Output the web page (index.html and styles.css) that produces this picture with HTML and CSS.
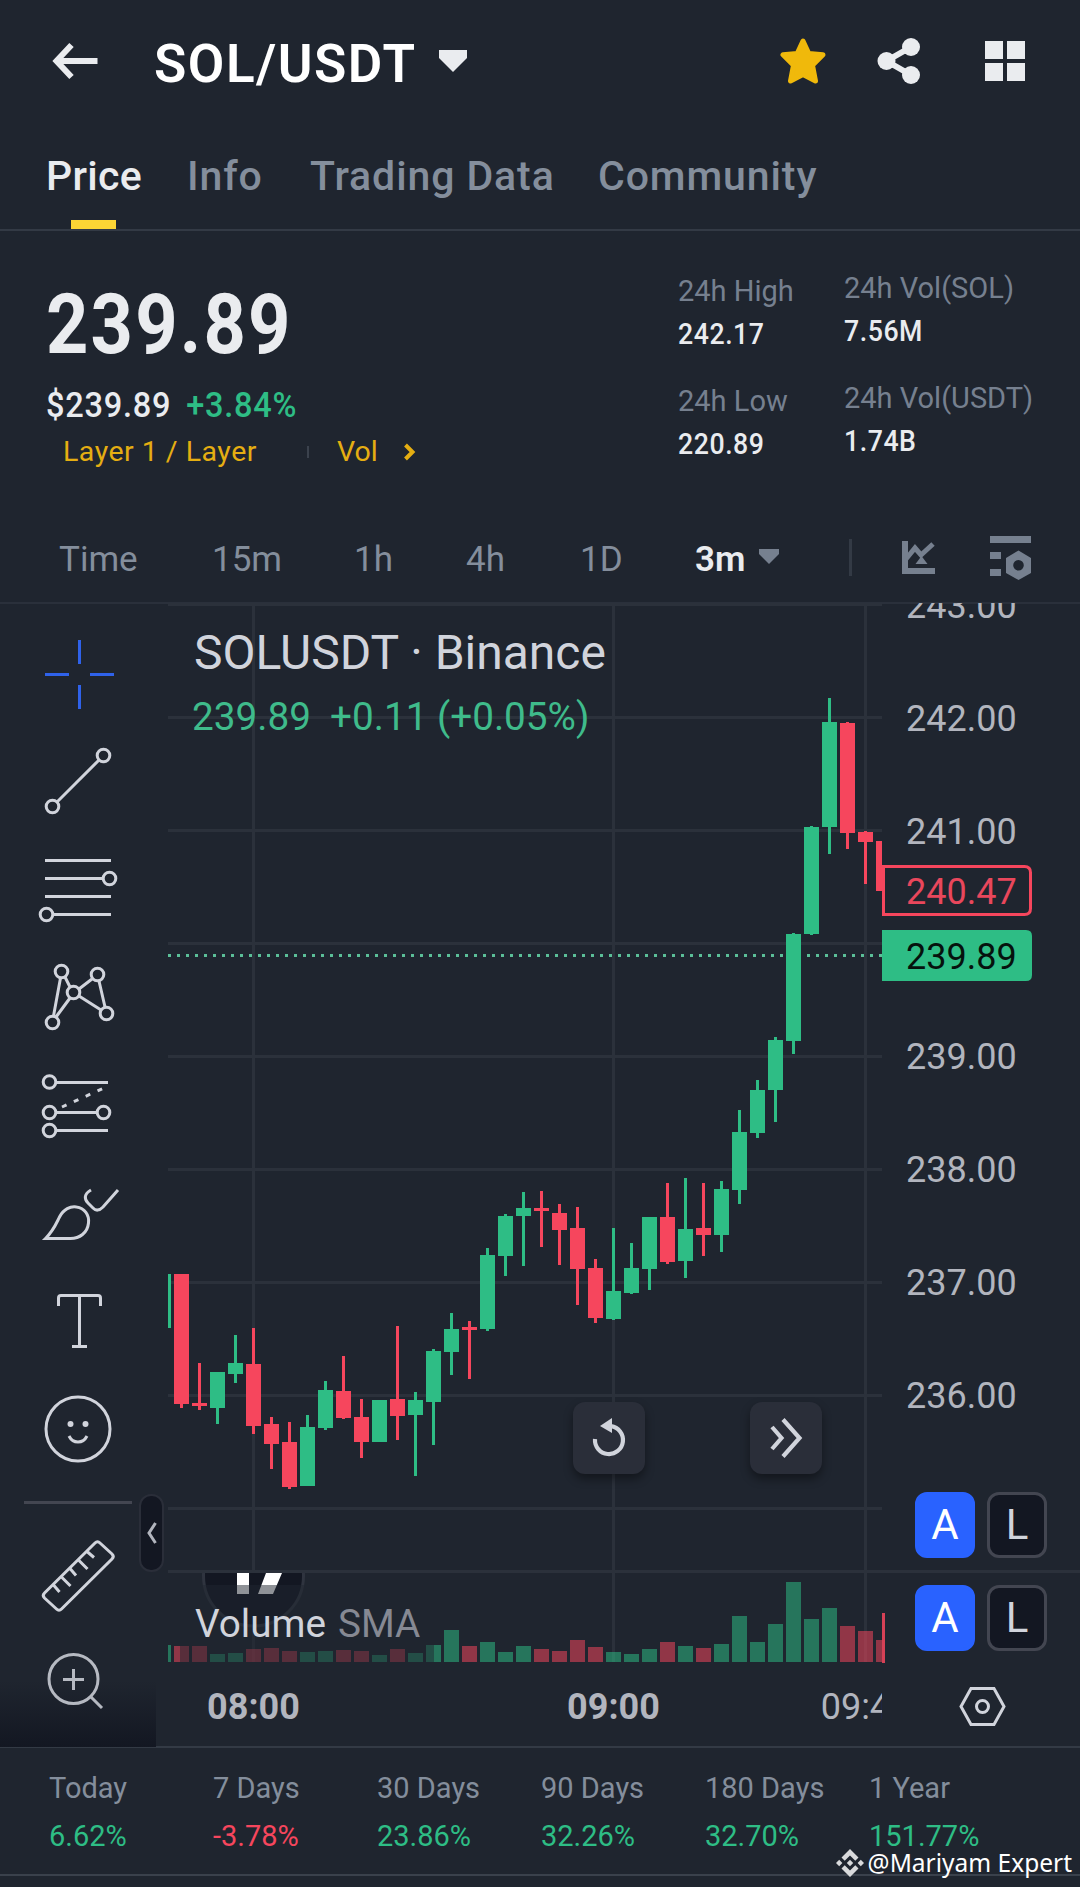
FILE: index.html
```
<!DOCTYPE html>
<html lang="en">
<head>
<meta charset="UTF-8">
<meta name="viewport" content="width=device-width, initial-scale=1.0">
<title>SOL/USDT</title>
<link rel="stylesheet" href="styles.css">
</head>
<body>

<header class="topbar">
  <svg class="back" width="46" height="38" viewBox="0 0 46 38"><path d="M45.500 19H5M19.500 3L4.500 19l15 16" fill="none" stroke="#eaecef" stroke-width="6"/></svg>
  <h1>SOL/USDT</h1>
  <svg class="caret" width="28" height="22" viewBox="0 0 28 22"><path d="M0 0h28v8L14 22 0 8z" fill="#eaecef"/></svg>
  <div class="actions">
    <svg width="46" height="48" viewBox="0 0 46 48"><path d="M23 4l5.800 12.500 14.200 1.300-10.500 10.500 3 15.700L23 37.500 10.500 44l3-15.700L3 17.800l14.200-1.300z" fill="#f0b90b" stroke="#f0b90b" stroke-width="5" stroke-linejoin="round"/></svg>
    <svg width="44" height="48" viewBox="0 0 44 48"><g fill="#eaecef"><circle cx="9.500" cy="24" r="9"/><circle cx="34" cy="10" r="9"/><circle cx="34" cy="38" r="9"/></g><path d="M34 10L9.500 24 34 38" fill="none" stroke="#eaecef" stroke-width="6"/></svg>
    <svg width="40" height="40" viewBox="0 0 40 40"><path d="M0 0h18v18H0zM22 0h18v18H22zM0 22h18v18H0zM22 22h18v18H22z" fill="#eaecef"/></svg>
  </div>
</header>

<nav class="tabs">
  <a class="tab active">Price</a>
  <a class="tab">Info</a>
  <a class="tab">Trading Data</a>
  <a class="tab">Community</a>
</nav>

<section class="ticker">
  <div class="quote">
    <div class="last">239.89</div>
    <div class="sub"><span>$239.89</span><span class="change up">+3.84%</span></div>
    <div class="tags">
      <span class="layer">Layer 1 / Layer</span>
      <i class="sep"></i>
      <span>Vol</span>
      <svg width="13" height="18" viewBox="0 0 13 18"><path d="M2.500 2l7 7-7 7" fill="none" stroke="#e5ae12" stroke-width="4"/></svg>
    </div>
  </div>
  <div class="stats">
    <div class="stat"><span>24h High</span><b>242.17</b></div>
    <div class="stat"><span>24h Low</span><b>220.89</b></div>
  </div>
  <div class="stats right">
    <div class="stat"><span>24h Vol(SOL)</span><b>7.56M</b></div>
    <div class="stat"><span>24h Vol(USDT)</span><b>1.74B</b></div>
  </div>
</section>

<nav class="intervals">
  <span>Time</span>
  <span>15m</span>
  <span>1h</span>
  <span>4h</span>
  <span>1D</span>
  <span class="selected">3m <svg width="20" height="15" viewBox="0 0 20 15"><path d="M0 0h20v5l-10 10L0 5z" fill="#76808f"/></svg></span>
  <i class="bar"></i>
  <svg width="34" height="34" viewBox="0 0 34 34"><path d="M3 0v30h30" fill="none" stroke="#76808f" stroke-width="6"/><path d="M4 18l9-11 6 7L31 3" fill="none" stroke="#76808f" stroke-width="5"/><path d="M19.500 15l6 8h-12z" fill="#76808f"/></svg>
  <svg width="42" height="44" viewBox="0 0 42 44"><path d="M0 0h41v7H0zM0 16h11v7H0zM0 33h11v7H0z" fill="#76808f"/><path d="M28.500 14.500L41 22v15l-12.500 7L16 37V22zM28.500 24a5.300 5.300 0 100 10.600 5.300 5.300 0 000-10.600z" fill="#76808f" fill-rule="evenodd"/></svg>
</nav>

<main class="chart">
  <aside class="tools">
    <svg class="blue" viewBox="0 620 156 108"><path d="M79.500 640v24M79.500 685v24M45 674.500h24M90 674.500h24"/></svg>
    <svg viewBox="0 728 156 108"><circle cx="52.500" cy="806.500" r="6.300"/><circle cx="103.500" cy="755.500" r="6.300"/><path d="M57 802l42-42"/></svg>
    <svg viewBox="0 836 156 108"><path d="M45 860.500h66M45 878.500h58M45 896.500h66M53 914.500h58"/><circle cx="109.500" cy="878.500" r="6.300"/><circle cx="46.500" cy="914.500" r="6.300"/></svg>
    <svg viewBox="0 944 156 108"><circle cx="61.500" cy="971.500" r="6.300"/><circle cx="97.500" cy="974.500" r="6.300"/><circle cx="73.500" cy="992.500" r="6.300"/><circle cx="106.500" cy="1013.500" r="6.300"/><circle cx="52.500" cy="1022.500" r="6.300"/><path d="M60.500 978l-7 38M65 977l5 10M79 989l13-10M99 981l6 26M79 996l22 14M70 998l-14 19"/></svg>
    <svg viewBox="0 1052 156 108"><circle cx="49.500" cy="1082" r="6.300"/><circle cx="49.500" cy="1112.500" r="6.300"/><circle cx="103.500" cy="1112.500" r="6.300"/><circle cx="49.500" cy="1130.500" r="6.300"/><path d="M56 1082.500h52M56 1112.500h41M56 1130.500h52"/><path d="M62 1107l42-19" stroke-dasharray="5 8"/></svg>
    <svg viewBox="0 1160 156 108"><path d="M45.500 1238.500c8-8 10-13.500 14-21.500 4-8 11-11 17-10 8 1 13 8 12 16-1 10-9 15.500-18 15.500zM91 1190c-7 4-7 9-3 13l5 5c3 3 6 3 10-1l15-17"/></svg>
    <svg viewBox="0 1268 156 108"><path d="M58.500 1306v-8q0-2.500 2.500-2.500h37q2.500 0 2.500 2.500v8M79.500 1296v50M72 1346.500h15"/></svg>
    <svg viewBox="0 1376 156 108"><circle cx="78" cy="1429" r="32"/><path d="M69 1436c4 8 14 8 18 0"/><g class="fill"><circle cx="70.500" cy="1424" r="3"/><circle cx="85.500" cy="1424" r="3"/></g></svg>
    <hr>
    <svg viewBox="0 1522 156 108"><path d="M95 1543q2.500-2.500 5 0l12 11q2.500 2.500 0 5l-50.500 50q-2.500 2.500-5 0l-12-11q-2.500-2.500 0-5zM53.500 1585l6 7M61.500 1577l9 9M70 1568.500l6 7M78.500 1560l9 9M87 1551.500l7 6"/></svg>
    <svg class="last-tool" viewBox="0 1630 156 117"><circle cx="73.500" cy="1679" r="24.500"/><path d="M63 1679.500h21M73.500 1669v21M91 1697l11 11"/></svg>
  </aside>

  <div class="plot">
    <svg id="plot" width="924" height="1145" viewBox="156 602 924 1145">
      <defs>
        <clipPath id="pane"><rect x="168" y="603" width="714" height="1144"/></clipPath>
        <clipPath id="scale"><rect x="882" y="603" width="198" height="1144"/></clipPath>
        <clipPath id="volPane"><rect x="168" y="1573" width="714" height="90"/></clipPath>
      </defs>

      <g class="grid">
        <path d="M168 604.500h714M168 717.500h714M168 830.500h714M168 943.500h714M168 1056.500h714M168 1169.500h714M168 1282.500h714M168 1395.500h714M168 1508.500h714"/>
        <path d="M253.500 603v1059M613.500 603v1059M865.500 603v1059"/>
        <path d="M168 1571.500h912"/>
      </g>

      <g clip-path="url(#volPane)">
        <circle cx="253.500" cy="1576" r="50" fill="#131722" stroke="#2f343f" stroke-width="3"/>
        <path d="M237 1573h12v21h-12zM266 1573h16l-9 21h-15z" fill="#fff"/>
      </g>

      <g id="volume" clip-path="url(#volPane)"></g>
      <rect x="180" y="1585" width="254" height="78" fill="#1f252f" opacity=".5"/>
      <path d="M883.500 1613v50" stroke="#f6465d" stroke-width="3" opacity=".85"/>

      <path d="M168 955.500h714" stroke="#5bbf98" stroke-width="3" stroke-dasharray="3 6"/>
      <g id="candles" clip-path="url(#pane)"></g>

      <text class="legend-title" x="194" y="669">SOLUSDT · Binance</text>
      <text class="legend-price" x="192" y="730">239.89</text>
      <text class="legend-price" x="330" y="730">+0.11 (+0.05%)</text>
      <text class="legend-vol" x="195" y="1637">Volume</text>
      <text class="legend-vol dim" x="338" y="1637">SMA</text>

      <g class="axis" clip-path="url(#scale)">
        <text x="906" y="618">243.00</text>
        <text x="906" y="731">242.00</text>
        <text x="906" y="844">241.00</text>
        <text x="906" y="1069">239.00</text>
        <text x="906" y="1182">238.00</text>
        <text x="906" y="1295">237.00</text>
        <text x="906" y="1408">236.00</text>
      </g>
      <path d="M883.500 866.500h141q6 0 6 6v36q0 6-6 6h-141z" fill="#1f252f" stroke="#f6465d" stroke-width="3"/>
      <text class="tag-red" x="906" y="904">240.47</text>
      <path d="M882 930h144q6 0 6 6v39q0 6-6 6H882z" fill="#2ebd85"/>
      <text class="tag-green" x="906" y="969">239.89</text>

      <g class="times" clip-path="url(#pane)">
        <text x="253.500" y="1719">08:00</text>
        <text x="613.500" y="1719">09:00</text>
        <text class="thin" x="865.500" y="1719">09:42</text>
      </g>
      <path d="M971 1688.500h23l10 18-10 18h-23l-10-18z" fill="none" stroke="#d1d4dc" stroke-width="3"/>
      <circle cx="982.500" cy="1706.500" r="6" fill="none" stroke="#d1d4dc" stroke-width="3"/>
    </svg>

    <button class="collapse"><svg width="10" height="24" viewBox="0 0 10 24"><path d="M8.500 2L2 12l6.500 10" fill="none" stroke="#b2b5be" stroke-width="3"/></svg></button>
    <button class="float reset"><svg width="36" height="40" viewBox="0 0 36 40"><path d="M20 8.200A14 14 0 1 1 4 21" fill="none" stroke="#d1d4dc" stroke-width="4.200"/><path d="M9 8L21 0v15z" fill="#d1d4dc"/></svg></button>
    <button class="float forward"><svg width="34" height="42" viewBox="0 0 34 42"><path d="M3 10l9.500 11L3 32M14 2.500L30.500 21 14 39.500" fill="none" stroke="#d1d4dc" stroke-width="4.200"/></svg></button>
    <div class="modes price-modes"><button class="mode on">A</button><button class="mode">L</button></div>
    <div class="modes vol-modes"><button class="mode on">A</button><button class="mode">L</button></div>
  </div>
</main>

<section class="performance">
  <div><span>Today</span><span class="up">6.62%</span></div>
  <div><span>7 Days</span><span class="down">-3.78%</span></div>
  <div><span>30 Days</span><span class="up">23.86%</span></div>
  <div><span>90 Days</span><span class="up">32.26%</span></div>
  <div><span>180 Days</span><span class="up">32.70%</span></div>
  <div><span>1 Year</span><span class="up">151.77%</span></div>
</section>

<div class="credit">
  <svg width="28" height="28" viewBox="0 0 28 28"><path d="M14 0l8.500 8.500-3.200 3.200L14 6.400l-5.300 5.300-3.200-3.200zM14 28l8.500-8.500-3.200-3.200L14 21.600l-5.300-5.300-3.200 3.200zM14 10.800l3.200 3.200-3.200 3.200-3.200-3.200zM3.200 10.800L6.400 14l-3.200 3.200L0 14zM24.800 10.800L28 14l-3.200 3.200-3.200-3.200z" fill="#d9dadc"/></svg>
  <span>@Mariyam Expert</span>
</div>

<script src="chart.js"></script>
</body>
</html>
```
FILE: styles.css
```
* {
  box-sizing: border-box;
}

body {
  position: relative;
  width: 1080px;
  height: 1887px;
  margin: 0;
  overflow: hidden;
  background: #1f252f;
  color: #eaecef;
  font-family: Roboto, "Noto Sans", sans-serif;
}

svg {
  display: block;
  flex: none;
}

button {
  padding: 0;
  border: 0;
  font-family: inherit;
}

.up {
  color: #2ebd85;
}

.down {
  color: #f6465d;
}

/* header */
.topbar {
  display: flex;
  align-items: center;
  height: 122px;
  padding: 0 55px 0 52px;
}

.topbar h1 {
  width: 262px;
  margin: 5px 0 0 56px;
  color: #fff;
  font-size: 53px;
  font-weight: 600;
  letter-spacing: 1.500px;
  white-space: nowrap;
}

.caret {
  margin-left: 23px;
}

.actions {
  display: flex;
  align-items: center;
  margin-left: auto;
}

.actions svg:nth-child(1) {
  margin-right: 51px;
}

.actions svg:nth-child(2) {
  margin-right: 64px;
}

.tabs {
  display: grid;
  grid-template-columns: 141px 123px 288px auto;
  height: 109px;
  padding-left: 46px;
  border-bottom: 2px solid #333a45;
}

.tab {
  justify-self: start;
  height: 107px;
  padding-top: 30px;
  color: #848e9c;
  font-size: 41px;
  line-height: 48px;
  font-weight: 500;
  letter-spacing: .9px;
  white-space: nowrap;
}

.tab.active {
  color: #eaecef;
  letter-spacing: .3px;
}

.tab.active::after {
  content: "";
  display: block;
  width: 45px;
  height: 9px;
  margin: 20px auto 0;
  background: #fcd535;
}

/* price and 24h stats */
.ticker {
  display: grid;
  grid-template-columns: 632px 166px auto;
  height: 284px;
  padding-left: 46px;
}

.last {
  margin-top: 46px;
  font-size: 84px;
  line-height: 96px;
  font-weight: 700;
  letter-spacing: 2.500px;
  transform: scaleX(.88);
  transform-origin: left;
}

.sub {
  display: flex;
  margin-top: 13px;
  font-size: 35px;
  line-height: 40px;
  font-weight: 500;
  letter-spacing: .8px;
  transform: scaleX(.93);
  transform-origin: left;
}

.change {
  margin-left: 16px;
}

.tags {
  display: flex;
  align-items: center;
  margin-top: 8px;
  padding-left: 17px;
  color: #e5ae12;
  font-size: 28.500px;
  line-height: 36px;
}

.layer {
  width: 244px;
  letter-spacing: .5px;
}

.sep {
  width: 2px;
  height: 12px;
  margin-right: 28px;
  background: #3b424d;
}

.tags svg {
  margin-left: 25px;
}

.stats {
  padding-top: 41px;
}

.stats.right {
  padding-top: 38px;
}

.stat {
  display: flex;
  flex-direction: column;
  height: 110px;
  font-size: 29px;
}

.stat span {
  height: 43px;
  color: #76808f;
  line-height: 38px;
  white-space: nowrap;
}

.stat b {
  font-weight: 500;
  line-height: 38px;
  letter-spacing: .6px;
  transform: scaleX(.92);
  transform-origin: left;
}

.intervals {
  display: grid;
  grid-template-columns: 153px 142px 112px 114px 115px 154px 53px 88px auto;
  align-items: center;
  height: 87px;
  padding-left: 59px;
  color: #848e9c;
  font-size: 35px;
}

.intervals span {
  margin-top: 1px;
}

.intervals .selected {
  display: flex;
  gap: 14px;
  color: #eaecef;
  font-weight: 600;
}

.selected svg {
  margin-top: 10px;
}

.intervals > svg, .bar {
  margin-top: -2px;
}

.bar {
  width: 3px;
  height: 37px;
  background: #333a45;
}

/* chart */
.chart {
  display: grid;
  grid-template-columns: 156px 924px;
  height: 1146px;
  border-top: 2px solid #2a303b;
  border-bottom: 2px solid #333a45;
}

.tools {
  padding-top: 16px;
  background: linear-gradient(to top, #131722, rgba(19, 23, 34, 0) 66px);
}

.tools svg {
  width: 156px;
  height: 108px;
  fill: none;
  stroke: #d1d4dc;
  stroke-width: 3;
}

.tools .blue {
  stroke: #2f62ea;
}

.tools .fill {
  fill: #d1d4dc;
  stroke: none;
}

.tools .last-tool {
  height: 117px;
  opacity: .85;
}

.tools hr {
  width: 108px;
  height: 3px;
  margin: 17px 0 18px 24px;
  border: 0;
  background: #434651;
}

.plot {
  position: relative;
}

#plot {
  margin-top: -2px;
}

.grid path {
  fill: none;
  stroke: #2b313b;
  stroke-width: 3;
}

.green {
  fill: #2ebd85;
}

.red {
  fill: #f6465d;
}

#volume {
  opacity: .53;
}

#plot text {
  font-family: Roboto, sans-serif;
}

.legend-title {
  fill: #d1d4dc;
  font-size: 48px;
}

.legend-price {
  fill: #3fbb8b;
  font-size: 38.700px;
}

.legend-vol {
  fill: #d1d4dc;
  font-size: 38.700px;
}

.legend-vol.dim {
  fill: #868993;
}

.axis text {
  fill: #b2b5be;
}

.axis text, .tag-red, .tag-green, .times text {
  font-size: 36px;
}

.tag-red {
  fill: #e9475c;
}

.tag-green {
  fill: #06120d;
}

.times text {
  fill: #b2b5be;
  font-weight: 700;
  text-anchor: middle;
}

.times .thin {
  font-weight: 400;
}

.collapse {
  position: absolute;
  top: 890px;
  left: -17px;
  display: flex;
  align-items: center;
  justify-content: center;
  width: 25px;
  height: 78px;
  border: 2px solid #2a2e39;
  border-radius: 12px;
  background: #131722;
}

.float {
  position: absolute;
  top: 798px;
  display: flex;
  align-items: center;
  justify-content: center;
  width: 72px;
  height: 72px;
  border-radius: 12px;
  background: #2a2e39;
  box-shadow: 0 5px 10px rgba(0, 0, 0, .4);
}

.reset {
  left: 417px;
}

.forward {
  left: 594px;
}

.modes {
  position: absolute;
  left: 759px;
  display: flex;
  gap: 12px;
}

.price-modes {
  top: 888px;
}

.vol-modes {
  top: 981px;
}

.mode {
  width: 60px;
  height: 66px;
  border: 3px solid #434651;
  border-radius: 12px;
  background: #131722;
  color: #d1d4dc;
  font-size: 42px;
  line-height: 56px;
}

.mode.on {
  border-color: #2962ff;
  background: #2962ff;
  color: #fff;
}

/* performance row */
.performance {
  display: grid;
  grid-template-columns: repeat(6, 164px);
  height: 128px;
  padding: 22px 0 0 49px;
  border-bottom: 2px solid #3a414c;
  color: #848e9c;
  font-size: 29px;
}

.performance span {
  display: block;
  height: 48px;
  line-height: 36px;
}

.performance div span:last-child {
  height: 36px;
}

.credit {
  position: absolute;
  top: 1847px;
  right: 8px;
  display: flex;
  align-items: center;
  gap: 4px;
  color: #fff;
  font-family: "Noto Sans", sans-serif;
  font-size: 24.500px;
  line-height: 32px;
}
```
FILE: chart.js
```
// [direction, high, low, body top, body bottom, volume top]
const bars = [
  ['r', 1274, 1408, 1274, 1404, 1646],
  ['r', 1363, 1410, 1403, 1406, 1646],
  ['g', 1372, 1424, 1372, 1408, 1654],
  ['g', 1335, 1383, 1363, 1374, 1653],
  ['r', 1328, 1434, 1364, 1426, 1649],
  ['r', 1417, 1469, 1424, 1444, 1648],
  ['r', 1422, 1489, 1442, 1487, 1651],
  ['g', 1415, 1486, 1427, 1486, 1652],
  ['g', 1381, 1430, 1390, 1428, 1651],
  ['r', 1356, 1419, 1391, 1418, 1650],
  ['r', 1399, 1458, 1417, 1442, 1651],
  ['g', 1400, 1442, 1400, 1442, 1655],
  ['r', 1326, 1440, 1399, 1416, 1649],
  ['g', 1392, 1476, 1400, 1415, 1653],
  ['g', 1349, 1445, 1351, 1402, 1645],
  ['g', 1313, 1375, 1329, 1352, 1630],
  ['r', 1321, 1379, 1327, 1330, 1646],
  ['g', 1248, 1331, 1255, 1329, 1642],
  ['g', 1214, 1276, 1216, 1256, 1652],
  ['g', 1192, 1266, 1208, 1216, 1646],
  ['r', 1191, 1247, 1208, 1211, 1649],
  ['r', 1204, 1265, 1213, 1230, 1651],
  ['r', 1207, 1305, 1228, 1269, 1640],
  ['r', 1259, 1323, 1268, 1318, 1647],
  ['g', 1228, 1320, 1291, 1319, 1652],
  ['g', 1243, 1294, 1268, 1293, 1654],
  ['g', 1217, 1290, 1217, 1269, 1649],
  ['r', 1183, 1264, 1217, 1262, 1642],
  ['g', 1178, 1278, 1229, 1261, 1646],
  ['r', 1183, 1256, 1228, 1235, 1648],
  ['g', 1181, 1252, 1189, 1235, 1644],
  ['g', 1110, 1204, 1132, 1190, 1616],
  ['g', 1080, 1138, 1090, 1133, 1642],
  ['g', 1037, 1122, 1040, 1090, 1624],
  ['g', 933, 1054, 934, 1041, 1582],
  ['g', 826, 935, 827, 934, 1619],
  ['g', 698, 854, 722, 827, 1608],
  ['r', 722, 849, 723, 833, 1626],
  ['r', 831, 884, 832, 842, 1631],
  ['r', 841, 891, 841, 891, 1640]
];

const colors = { g: 'green', r: 'red' };
const base = 1662;

function rect(color, x, y, width, height) {
  return `<rect class="${color}" x="${x}" y="${y}" width="${width}" height="${height}"/>`;
}

let candles = rect('green', 168, 1274, 3, 54);
let volume = rect('green', 168, 1645, 3, base - 1645);

bars.forEach(([dir, high, low, top, bottom, vol], i) => {
  const x = 174 + i * 18;
  const color = colors[dir];
  candles += rect(color, x + 6, high, 3, low - high);
  candles += rect(color, x, top, 15, bottom - top);
  volume += rect(color, x, vol, 15, base - vol);
});

document.getElementById('candles').innerHTML = candles;
document.getElementById('volume').innerHTML = volume;
```
